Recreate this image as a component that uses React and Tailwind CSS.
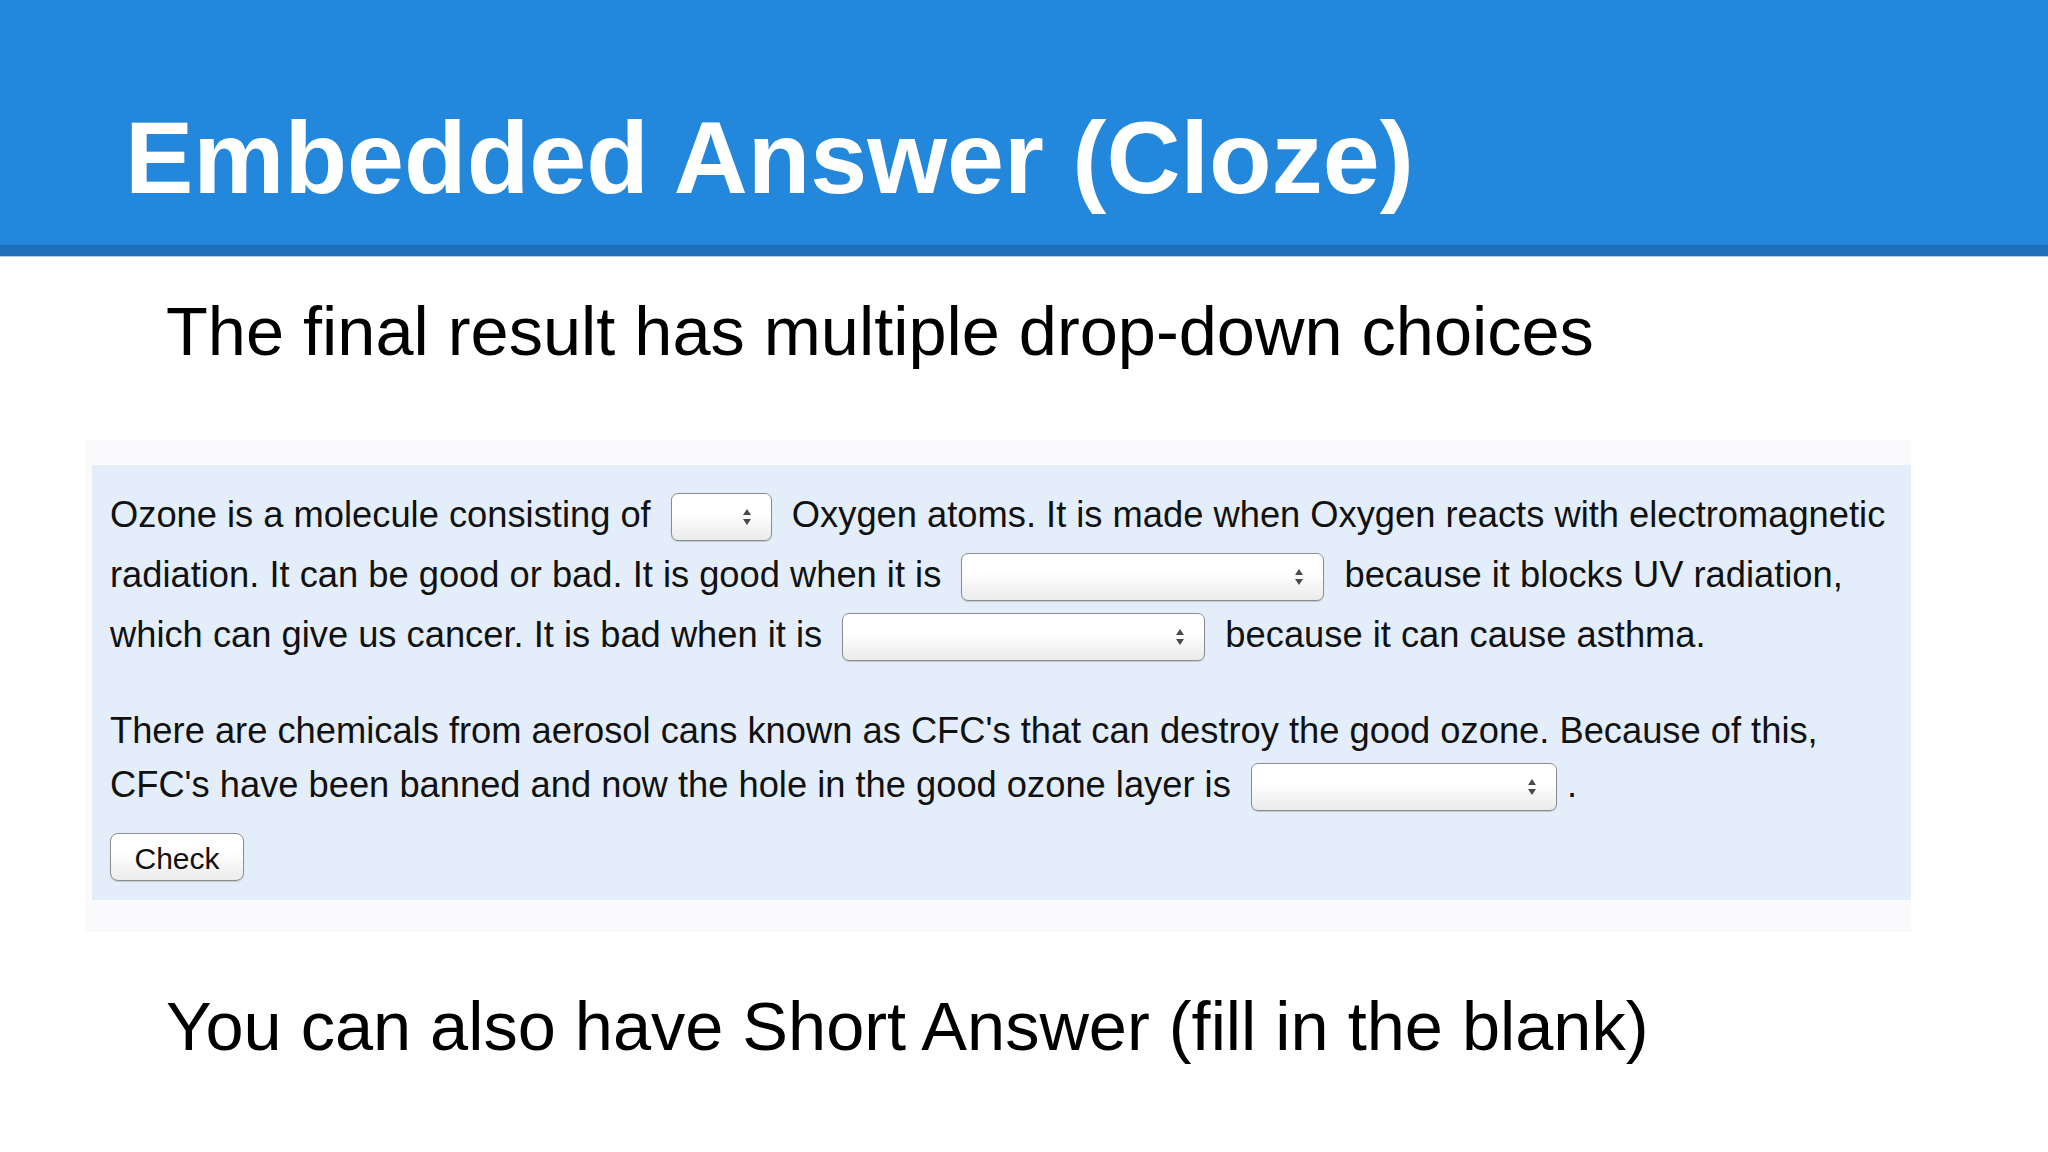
const Select = ({ w }) => (
  <span
    className="inline-flex align-middle items-center justify-end mx-[10px] my-[6px] h-[48px] rounded-[7px] border-[1.5px] border-[#8c8c8c] bg-gradient-to-b from-white from-40% to-[#ebebeb] pr-[19px] shadow-[0_1px_1px_rgba(0,0,0,0.15)]"
    style={{ width: w }}
  >
    <svg width="10" height="18" viewBox="0 0 10 18">
      <path d="M5 1 L9 7 L1 7 Z" fill="#4a4a4a" />
      <path d="M1 11 L9 11 L5 17 Z" fill="#4a4a4a" />
    </svg>
  </span>
);

export default function App() {
  return (
    <div className="w-[2048px] h-[1152px] bg-white overflow-hidden [font-family:'Liberation_Sans',Arial,sans-serif]">
      {/* slide header */}
      <header className="bg-[#2387dc]">
        <div className="h-[245px] pt-[107px] pl-[125px]">
          <h1 className="text-[102.5px] leading-none font-bold text-white">Embedded Answer (Cloze)</h1>
        </div>
        <div className="h-[12px] bg-[#1c6fb8] border-b border-[#a9cbea]" />
      </header>

      <h2 className="mt-[41px] pl-[166px] text-[68.5px] leading-none text-black">
        The final result has multiple drop-down choices
      </h2>

      {/* embedded screenshot of the quiz */}
      <div className="mt-[73px] ml-[85px] w-[1826px] bg-[#fafafc] pl-[7px] pt-[25px] pb-[32px]">
        <div className="bg-[#e3eefa] pt-[22px] pl-[18px] pr-[12px] pb-[19px] text-[36.3px] leading-[53px] text-[#111]">
          <p>
            Ozone is a molecule consisting of <Select w={101} /> Oxygen atoms. It is made when Oxygen reacts
            with electromagnetic radiation. It can be good or bad. It is good when it is <Select w={363} /> because
            it blocks UV radiation, which can give us cancer. It is bad when it is <Select w={363} /> because it can
            cause asthma.
          </p>
          <p className="mt-[37px]">
            There are chemicals from aerosol cans known as CFC's that can destroy the good ozone. Because of this,
            CFC's have been banned and now the hole in the good ozone layer is <Select w={306} />.
          </p>
          <div className="mt-[16px] flex">
            <button
              type="button"
              className="w-[134px] h-[48px] pt-[4px] rounded-[8px] border-[1.5px] border-[#8c8c8c] bg-gradient-to-b from-white from-40% to-[#ebebeb] text-[30px] leading-none text-[#111] shadow-[0_1px_1px_rgba(0,0,0,0.15)]"
            >
              Check
            </button>
          </div>
        </div>
      </div>

      <h2 className="mt-[61px] pl-[166px] text-[68.5px] leading-none text-black">
        You can also have Short Answer (fill in the blank)
      </h2>
    </div>
  );
}
